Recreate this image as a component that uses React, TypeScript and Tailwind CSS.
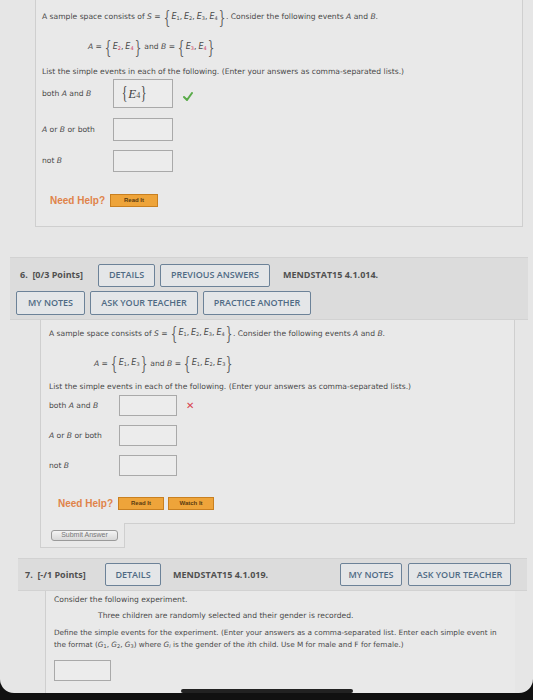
import React from "react";

const body = "font-['DejaVu_Sans',sans-serif] text-[7.6px] text-[#4a4a4a]";
const head = "font-['Open_Sans',sans-serif]";

function Brace({ c }: { c: string }) {
  return (
    <span className="inline-block font-['DejaVu_Serif',serif] text-[13px] leading-none text-[#555] scale-y-[1.45] scale-x-[0.8] font-thin">
      {c}
    </span>
  );
}

function Ev({ n, red }: { n: number; red?: boolean }) {
  return (
    <span className="italic text-[8px]">
      E<sub className={`text-[5px] not-italic ${red ? "text-[#d04060]" : ""}`}>{n}</sub>
    </span>
  );
}

function Set({ items, red }: { items: number[]; red?: boolean }) {
  return (
    <span className="inline-flex items-center">
      <Brace c="{" />
      {items.map((n, i) => (
        <span key={n}>
          <Ev n={n} red={red} />
          {i < items.length - 1 ? <span className="mr-[2px]">,</span> : null}
        </span>
      ))}
      <Brace c="}" />
    </span>
  );
}

function Box({ w, h, children }: { w: string; h: string; children?: React.ReactNode }) {
  return (
    <div className={`${w} ${h} border border-[#a9a9a9] bg-[#ececec] flex items-center pl-[7px]`}>
      {children}
    </div>
  );
}

function Btn({ label, w, h = "h-[23px]" }: { label: string; w: string; h?: string }) {
  return (
    <div
      className={`${w} ${h} border-[1.5px] border-[#6c8298] rounded-[2px] bg-[#e4e6e8] flex items-center justify-center ${head} text-[9px] text-[#4f6a84] font-semibold`}
    >
      {label}
    </div>
  );
}

function Orange({ label, w }: { label: string; w: string }) {
  return (
    <div
      className={`${w} h-[13px] bg-[#eea43a] border border-[#c98020] flex items-center justify-center font-['Liberation_Sans',sans-serif] text-[6px] font-bold text-[#5a3a10]`}
    >
      {label}
    </div>
  );
}

export default function App() {
  return (
    <div className="w-[533px] h-[700px] bg-[#111] overflow-hidden">
      <div className="h-[693px] bg-[#e6e6e6] rounded-b-[14px] overflow-hidden flex flex-col">
        {/* previous question tail */}
        <div className={`ml-[35px] mr-[10px] h-[228px] border-x border-b border-[#cfcfcf] bg-[#e9e9e9] pl-[6px] pt-[8px] ${body} flex flex-col`}>
          <div className="h-[18px] flex items-center">
            A sample space consists of&nbsp;<span className="italic">S</span>&nbsp;=&nbsp;
            <Set items={[1, 2, 3, 4]} />. Consider the following events&nbsp;<span className="italic">A</span>&nbsp;and&nbsp;<span className="italic">B</span>.
          </div>
          <div className="h-[18px] mt-[12px] pl-[46px] flex items-center">
            <span className="italic">A</span>&nbsp;=&nbsp;<Set items={[2, 4]} red />&nbsp;and&nbsp;<span className="italic">B</span>&nbsp;=&nbsp;<Set items={[3, 4]} red />
          </div>
          <div className="h-[10px] mt-[11px] flex items-center">
            List the simple events in each of the following. (Enter your answers as comma-separated lists.)
          </div>
          <div className="mt-[2px] flex items-center">
            <div className="w-[71px]">both <span className="italic">A</span> and <span className="italic">B</span></div>
            <Box w="w-[60px]" h="h-[29px]">
              <span className="inline-flex items-center font-['Liberation_Serif',serif] text-[13px] text-[#444]">
                <span className="inline-block scale-y-[1.3] scale-x-[0.8] text-[15px]">{"{"}</span>
                <span className="italic">E</span><sub className="text-[8px]">4</sub>
                <span className="inline-block scale-y-[1.3] scale-x-[0.8] text-[15px]">{"}"}</span>
              </span>
            </Box>
            <svg className="ml-[10px] mt-[6px]" width="10" height="9" viewBox="0 0 10 9">
              <path d="M1 5 L4 8 L9 1" fill="none" stroke="#5aab4a" strokeWidth="2" strokeLinecap="round" strokeLinejoin="round" />
            </svg>
          </div>
          <div className="mt-[10px] flex items-center">
            <div className="w-[71px]"><span className="italic">A</span> or <span className="italic">B</span> or both</div>
            <Box w="w-[60px]" h="h-[23px]" />
          </div>
          <div className="mt-[9px] flex items-center">
            <div className="w-[71px]">not <span className="italic">B</span></div>
            <Box w="w-[60px]" h="h-[22px]" />
          </div>
          <div className="mt-[21px] h-[14px] pl-[8px] flex items-center gap-[5px]">
            <span className="font-['Liberation_Sans',sans-serif] text-[10px] font-bold text-[#e0834a]">Need Help?</span>
            <Orange label="Read It" w="w-[48px]" />
          </div>
        </div>

        {/* question 6 header */}
        <div className="mt-[30px] ml-[10px] mr-[5px] h-[64px] bg-[#dcdcdc] border-y border-[#d2d2d2] pl-[6px] pt-[6px] flex flex-col gap-[4px]">
          <div className="flex items-center">
            <span className={`${head} text-[9px] font-bold text-[#505050] ml-[4px] w-[78px]`}>6.&nbsp; [0/3 Points]</span>
            <Btn label="DETAILS" w="w-[57px]" />
            <div className="w-[5px]" />
            <Btn label="PREVIOUS ANSWERS" w="w-[110px]" />
            <span className={`${head} text-[9px] font-bold text-[#505050] ml-[13px]`}>MENDSTAT15 4.1.014.</span>
          </div>
          <div className="flex items-center gap-[5px]">
            <Btn label="MY NOTES" w="w-[69px]" h="h-[24px]" />
            <Btn label="ASK YOUR TEACHER" w="w-[108px]" h="h-[24px]" />
            <Btn label="PRACTICE ANOTHER" w="w-[108px]" h="h-[24px]" />
          </div>
        </div>

        {/* question 6 body */}
        <div className={`ml-[40px] mr-[18px] border-x border-[#cfcfcf] bg-[#e9e9e9] pl-[8px] pt-[4px] pb-[13px] ${body} flex flex-col`}>
          <div className="h-[18px] flex items-center">
            A sample space consists of&nbsp;<span className="italic">S</span>&nbsp;=&nbsp;
            <Set items={[1, 2, 3, 4]} />. Consider the following events&nbsp;<span className="italic">A</span>&nbsp;and&nbsp;<span className="italic">B</span>.
          </div>
          <div className="h-[18px] mt-[12px] pl-[45px] flex items-center">
            <span className="italic">A</span>&nbsp;=&nbsp;<Set items={[1, 3]} />&nbsp;and&nbsp;<span className="italic">B</span>&nbsp;=&nbsp;<Set items={[1, 2, 3]} />
          </div>
          <div className="h-[10px] mt-[9px] flex items-center">
            List the simple events in each of the following. (Enter your answers as comma-separated lists.)
          </div>
          <div className="mt-[4px] flex items-center">
            <div className="w-[70px]">both <span className="italic">A</span> and <span className="italic">B</span></div>
            <Box w="w-[58px]" h="h-[21px]" />
            <span className="ml-[9px] font-['DejaVu_Sans',sans-serif] text-[10px] font-bold text-[#d8434f]">✕</span>
          </div>
          <div className="mt-[9px] flex items-center">
            <div className="w-[70px]"><span className="italic">A</span> or <span className="italic">B</span> or both</div>
            <Box w="w-[58px]" h="h-[21px]" />
          </div>
          <div className="mt-[9px] flex items-center">
            <div className="w-[70px]">not <span className="italic">B</span></div>
            <Box w="w-[58px]" h="h-[21px]" />
          </div>
          <div className="mt-[20px] h-[14px] pl-[9px] flex items-center gap-[4px]">
            <span className="font-['Liberation_Sans',sans-serif] text-[10px] font-bold text-[#e0834a] mr-[1px]">Need Help?</span>
            <Orange label="Read It" w="w-[46px]" />
            <Orange label="Watch It" w="w-[46px]" />
          </div>
        </div>
        <div className="ml-[40px] mr-[18px] flex">
          <div className="w-[85px] h-[25px] border-x border-b border-[#cfcfcf] bg-[#e9e9e9] flex items-center pl-[10px]">
            <div className="w-[67px] h-[11px] rounded-[3px] border border-[#9a9a9a] bg-gradient-to-b from-[#f4f4f4] to-[#d8d8d8] flex items-center justify-center font-['Liberation_Sans',sans-serif] text-[7px] text-[#777]">
              Submit Answer
            </div>
          </div>
          <div className="flex-1 border-t border-[#cfcfcf]" />
        </div>

        {/* question 7 header */}
        <div className="mt-[10px] ml-[18px] mr-[6px] h-[33px] bg-[#dcdcdc] border-y border-[#d2d2d2] flex items-center pl-[7px] pr-[16px]">
          <span className={`${head} text-[9px] font-bold text-[#505050] w-[80px]`}>7.&nbsp; [-/1 Points]</span>
          <Btn label="DETAILS" w="w-[56px]" />
          <span className={`${head} text-[9px] font-bold text-[#505050] ml-[12px]`}>MENDSTAT15 4.1.019.</span>
          <div className="flex-1" />
          <Btn label="MY NOTES" w="w-[62px]" />
          <div className="w-[6px]" />
          <Btn label="ASK YOUR TEACHER" w="w-[103px]" />
        </div>

        {/* question 7 body */}
        <div className={`ml-[45px] mr-[18px] flex-1 border-l border-[#cfcfcf] bg-[#e9e9e9] pl-[8px] pt-[4px] ${body} flex flex-col`}>
          <div className="h-[10px] flex items-center">Consider the following experiment.</div>
          <div className="h-[10px] mt-[6px] pl-[44px] flex items-center">Three children are randomly selected and their gender is recorded.</div>
          <div className="mt-[6px] leading-[12px] text-[7.3px]">
            Define the simple events for the experiment. (Enter your answers as a comma-separated list. Enter each simple event in
            <br />
            the format (<span className="italic">G</span><sub className="text-[5px]">1</sub>, <span className="italic">G</span><sub className="text-[5px]">2</sub>, <span className="italic">G</span><sub className="text-[5px]">3</sub>) where <span className="italic">G</span><sub className="text-[5px] italic">i</sub> is the gender of the <span className="italic">i</span>th child. Use M for male and F for female.)
          </div>
          <div className="mt-[9px]">
            <Box w="w-[57px]" h="h-[21px]" />
          </div>
          <div className="mt-[8px] ml-[127px] w-[172px] h-[4px] rounded-full bg-[#222]" />
        </div>
      </div>
    </div>
  );
}
